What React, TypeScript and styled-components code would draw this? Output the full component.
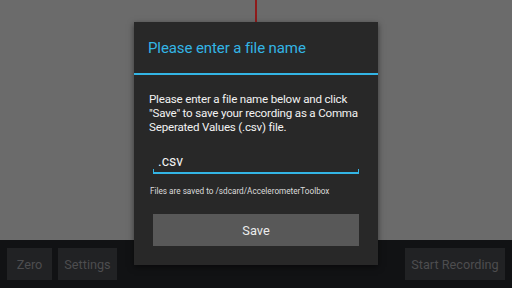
import React, { FC } from 'react';
import styled, { createGlobalStyle } from 'styled-components';

const GlobalStyle = createGlobalStyle`
  html, body {
    margin: 0;
    padding: 0;
    width: 512px;
    height: 288px;
    overflow: hidden;
    font-family: Roboto, "Noto Sans", Arial, sans-serif;
  }
`;

const Screen = styled.div`
  position: relative;
  display: flex;
  flex-direction: column;
  width: 512px;
  height: 288px;
`;

const Graph = styled.div`
  flex: 1;
  display: flex;
  justify-content: center;
  background: #6b6b6b;
`;

const Marker = styled.div`
  width: 2px;
  height: 22px;
  background: #8e1b1b;
`;

const BottomBar = styled.div`
  height: 48px;
  flex-shrink: 0;
  display: flex;
  align-items: center;
  justify-content: space-between;
  padding: 0 7px;
  box-sizing: border-box;
  background: #111214;
`;

const ButtonGroup = styled.div`
  display: flex;
  gap: 6px;
`;

const BarButton = styled.div<{ $width: number }>`
  width: ${(p) => p.$width}px;
  height: 32px;
  display: flex;
  align-items: center;
  justify-content: center;
  background: #212224;
  color: #4d4d4f;
  font-size: 12.7px;
`;

const Dialog = styled.div`
  position: absolute;
  left: 134px;
  top: 22px;
  width: 244px;
  height: 243px;
  display: flex;
  flex-direction: column;
  background: #282828;
  box-shadow: 0 2px 6px rgba(0, 0, 0, 0.5);

  & > * {
    flex-shrink: 0;
  }
`;

const Title = styled.div`
  height: 51px;
  display: flex;
  align-items: center;
  padding-left: 14px;
  color: #33b5e5;
  font-size: 15px;
  letter-spacing: -0.1px;
`;

const Divider = styled.div`
  height: 2px;
  background: #33b5e5;
`;

const Body = styled.div`
  display: flex;
  flex-direction: column;
  padding: 17px 19px 0 19px;

  & > * {
    flex-shrink: 0;
  }
`;

const Message = styled.p`
  margin: 0 -14px 0 -4px;
  color: #f2f2f2;
  font-size: 11.6px;
  line-height: 14px;
  white-space: nowrap;
  letter-spacing: -0.2px;
`;

const Field = styled.div`
  margin-top: 16px;
  height: 22px;
  display: flex;
  align-items: center;
  padding-left: 4px;
  color: #f2f2f2;
  font-size: 14px;
  border: 1px solid #33b5e5;
  border-top: none;
  border-bottom-width: 2px;
  position: relative;
`;

const FieldCover = styled.div`
  position: absolute;
  left: -1px;
  right: -1px;
  top: 0;
  height: 19px;
  background: #282828;
`;

const FieldText = styled.span`
  position: relative;
`;

const Hint = styled.div`
  margin: 12px 0 0 -3px;
  color: #dcdcdc;
  font-size: 8.2px;
`;

const SaveButton = styled.div`
  margin-top: 18px;
  height: 32px;
  display: flex;
  align-items: center;
  justify-content: center;
  background: #585858;
  color: #ececec;
  font-size: 12.8px;
`;

const App: FC = () => (
  <>
    <GlobalStyle />
    <Screen>
      <Graph>
        <Marker />
      </Graph>
      <BottomBar>
        <ButtonGroup>
          <BarButton $width={45}>Zero</BarButton>
          <BarButton $width={59}>Settings</BarButton>
        </ButtonGroup>
        <BarButton $width={100}>Start Recording</BarButton>
      </BottomBar>
      <Dialog>
        <Title>Please enter a file name</Title>
        <Divider />
        <Body>
          <Message>
            Please enter a file name below and click
            <br />
            "Save" to save your recording as a Comma
            <br />
            Seperated Values (.csv) file.
          </Message>
          <Field>
            <FieldCover />
            <FieldText>.csv</FieldText>
          </Field>
          <Hint>Files are saved to /sdcard/AccelerometerToolbox</Hint>
          <SaveButton>Save</SaveButton>
        </Body>
      </Dialog>
    </Screen>
  </>
);

export default App;
